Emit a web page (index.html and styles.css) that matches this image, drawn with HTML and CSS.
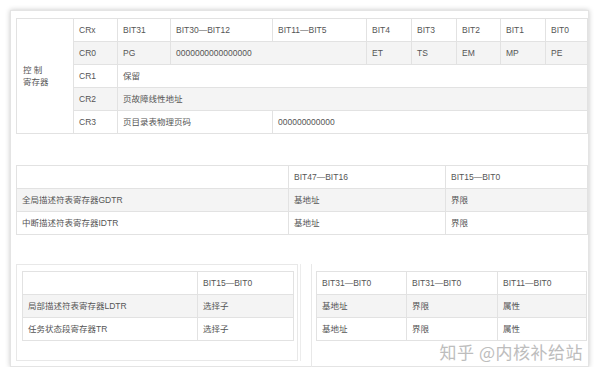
FILE: index.html
```html
<!DOCTYPE html>
<html lang="zh">
<head>
<meta charset="utf-8">
<link rel="stylesheet" href="styles.css">
</head>
<body>
<div class="card">
  <table class="grid t1">
    <colgroup>
      <col style="width:57px"><col style="width:44px"><col style="width:53px"><col style="width:102px"><col style="width:94px">
      <col style="width:45px"><col style="width:45px"><col style="width:44px"><col style="width:45px"><col style="width:42px">
    </colgroup>
    <tr>
      <td class="group" rowspan="5">控 制<br>寄存器</td>
      <td>CRx</td><td>BIT31</td><td>BIT30—BIT12</td><td>BIT11—BIT5</td><td>BIT4</td><td>BIT3</td><td>BIT2</td><td>BIT1</td><td>BIT0</td>
    </tr>
    <tr class="alt">
      <td>CR0</td><td>PG</td><td colspan="2">0000000000000000</td><td>ET</td><td>TS</td><td>EM</td><td>MP</td><td>PE</td>
    </tr>
    <tr>
      <td>CR1</td><td colspan="8">保留</td>
    </tr>
    <tr class="alt">
      <td>CR2</td><td colspan="8">页故障线性地址</td>
    </tr>
    <tr>
      <td>CR3</td><td colspan="2">页目录表物理页码</td><td colspan="6">000000000000</td>
    </tr>
  </table>

  <table class="grid t2">
    <colgroup><col style="width:272px"><col style="width:157px"><col style="width:142px"></colgroup>
    <tr><td></td><td>BIT47—BIT16</td><td>BIT15—BIT0</td></tr>
    <tr class="alt"><td>全局描述符表寄存器GDTR</td><td>基地址</td><td>界限</td></tr>
    <tr><td>中断描述符表寄存器IDTR</td><td>基地址</td><td>界限</td></tr>
  </table>

  <div class="lower">
    <div class="box box-left">
      <table class="grid t3">
        <colgroup><col style="width:175px"><col style="width:96px"></colgroup>
        <tr><td></td><td>BIT15—BIT0</td></tr>
        <tr class="alt"><td>局部描述符表寄存器LDTR</td><td>选择子</td></tr>
        <tr><td>任务状态段寄存器TR</td><td>选择子</td></tr>
      </table>
    </div>
    <div class="box box-right">
      <div class="inner">
        <table class="grid t4">
          <colgroup><col style="width:90px"><col style="width:91px"><col style="width:89px"></colgroup>
          <tr><td>BIT31—BIT0</td><td>BIT31—BIT0</td><td>BIT11—BIT0</td></tr>
          <tr class="alt"><td>基地址</td><td>界限</td><td>属性</td></tr>
          <tr><td>基地址</td><td>界限</td><td>属性</td></tr>
        </table>
      </div>
    </div>
  </div>
  <div class="watermark">知乎 @内核补给站</div>
</div>
</body>
</html>
```

FILE: styles.css
```css
html, body {
  margin: 0;
  padding: 0;
  background: #ffffff;
}

body {
  font-family: "Liberation Sans", "Noto Sans CJK SC", sans-serif;
  font-size: 8.5px;
  color: #555555;
}

.card {
  position: relative;
  margin: 10px 0 0 10px;
  width: 579px;
  height: 357px;
  box-sizing: border-box;
  border: 1px solid #e4e4e4;
  box-shadow: 0 0 5px rgba(0, 0, 0, 0.22);
  padding: 7px 1px 5px 5px;
  background: #fff;
}

.grid {
  border-collapse: collapse;
  table-layout: fixed;
}

.grid td {
  border: 1px solid #e2e2e2;
  height: 22px;
  padding: 0 5px;
  line-height: 12px;
  vertical-align: middle;
  white-space: nowrap;
  overflow: hidden;
}

.grid tr.alt td {
  background: #f4f4f4;
}

.grid td.group {
  background: #fff;
  padding-left: 6px;
}

.t1 {
  width: 571px;
}

.t2 {
  width: 571px;
  margin-top: 31px;
}

.lower {
  display: flex;
  margin-top: 29px;
  height: 97px;
}

.box {
  box-sizing: border-box;
  height: 97px;
}

.box-left {
  width: 282px;
  border: 1px solid #e8e8e8;
  padding: 6px 4px 0 5px;
}

.t3 {
  width: 271px;
}

.box-right {
  margin-left: 2px;
  width: 289px;
  border-left: 1px solid #ececec;
  padding-left: 10px;
}

.inner {
  height: 100%;
  border-left: 1px solid #e8e8e8;
  padding: 7px 0 0 4px;
}

.t4 {
  width: 270px;
}

.watermark {
  position: absolute;
  right: 5px;
  bottom: 4px;
  font-family: "Noto Sans CJK SC", sans-serif;
  font-size: 17px;
  line-height: 20px;
  color: #bdbdbd;
  letter-spacing: 0.5px;
}
```
